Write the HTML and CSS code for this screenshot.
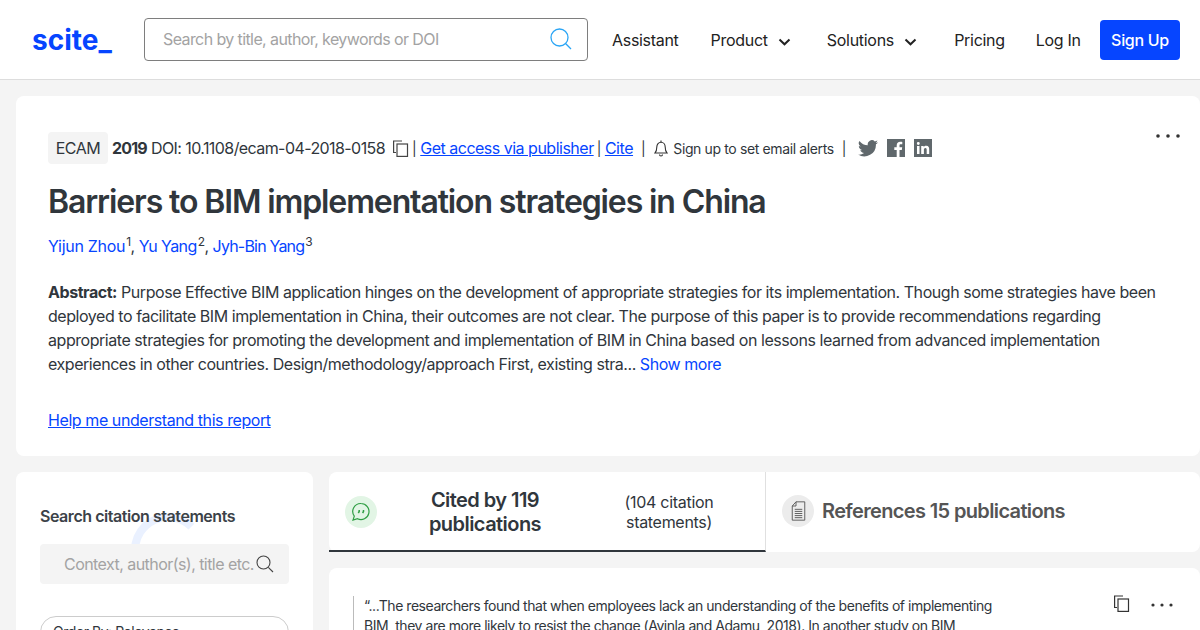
FILE: index.html
```html
<!DOCTYPE html>
<html lang="en">
<head>
<meta charset="utf-8">
<title>Barriers to BIM implementation strategies in China</title>
<link rel="stylesheet" href="styles.css">
</head>
<body>
<header class="topbar">
  <a class="logo">scite_</a>
  <div class="search">
    <span class="search-text">Search by title, author, keywords or DOI</span>
    <svg class="search-icon" width="24" height="24" viewBox="0 0 24 24" fill="none" stroke="#2aa5f5" stroke-width="1.3"><circle cx="10.5" cy="10.5" r="8.5"/><path d="M16.8 16.8 22 22"/></svg>
  </div>
  <nav class="nav">
    <a class="nav-a assistant">Assistant</a>
    <a class="nav-a product">Product <svg class="chev" width="13" height="8" viewBox="0 0 13 8" fill="none" stroke="#222" stroke-width="2"><path d="M1.500 1.500 6.500 6.300l5-4.800"/></svg></a>
    <a class="nav-a solutions">Solutions <svg class="chev" width="13" height="8" viewBox="0 0 13 8" fill="none" stroke="#222" stroke-width="2"><path d="M1.500 1.500 6.500 6.300l5-4.800"/></svg></a>
    <a class="nav-a pricing">Pricing</a>
    <a class="nav-a login">Log In</a>
    <a class="signup">Sign Up</a>
  </nav>
</header>
<main class="page">
  <section class="paper card">
    <svg class="dots dots-top" width="24" height="4" viewBox="0 0 24 4" fill="#333"><circle cx="2" cy="2" r="1.800"/><circle cx="12" cy="2" r="1.800"/><circle cx="22" cy="2" r="1.800"/></svg>
    <div class="meta">
      <span class="journal">ECAM</span>
      <b class="year">2019</b>
      <span class="doi">DOI: 10.1108/ecam-04-2018-0158</span>
      <svg class="copy" width="17" height="17" viewBox="0 0 17 17" fill="none" stroke="#444" stroke-width="1.200"><path d="M10 1H1.600v11.500H4"/><rect x="5" y="4" width="10.500" height="12.400"/></svg>
      <span class="sep sep1">|</span>
      <a class="link publisher">Get access via publisher</a>
      <span class="sep sep2">|</span>
      <a class="link cite">Cite</a>
      <span class="sep sep3">|</span>
      <svg class="bell" width="14" height="17" viewBox="0 0 14 17" fill="none" stroke="#333" stroke-width="1.100"><path d="M1 13h12c-1.500-1.500-1.800-3-1.800-6 0-2.800-1.800-4.800-4.200-4.800S2.800 4.200 2.800 7c0 3-.3 4.500-1.800 6Z"/><path d="M7 .5v1.700M5.500 14.500a1.500 1.500 0 0 0 3 0"/></svg>
      <span class="alerts">Sign up to set email alerts</span>
      <span class="sep sep4">|</span>
      <svg class="social tw" width="20" height="17" viewBox="0 0 24 20" fill="#60686c"><path d="M24 2.400a9.800 9.800 0 0 1-2.800.8A4.900 4.900 0 0 0 23.300.5a9.800 9.800 0 0 1-3.100 1.200 4.900 4.900 0 0 0-8.400 4.500A14 14 0 0 1 1.700.9a4.900 4.900 0 0 0 1.500 6.600 4.900 4.900 0 0 1-2.200-.6c0 2.300 1.600 4.400 3.900 4.900a4.900 4.900 0 0 1-2.200.1 4.900 4.900 0 0 0 4.600 3.400A9.900 9.900 0 0 1 0 17.300 14 14 0 0 0 21.500 4.900 10 10 0 0 0 24 2.400Z"/></svg>
      <svg class="social fb" width="18" height="18" viewBox="0 0 18 18"><rect width="18" height="18" fill="#60686c"/><path fill="#fff" d="M12.500 18v-7h2.300l.4-2.700h-2.700V6.600c0-.8.200-1.300 1.300-1.300h1.500V2.900c-.3 0-1.100-.1-2.100-.1-2.100 0-3.500 1.300-3.500 3.600v1.900H7.300V11h2.400v7h2.800Z"/></svg>
      <svg class="social li" width="18" height="18" viewBox="0 0 18 18"><rect width="18" height="18" fill="#60686c"/><path fill="#fff" d="M3 7h2.500v8H3V7Zm1.300-4a1.400 1.400 0 1 1 0 2.900 1.400 1.400 0 0 1 0-2.900ZM7.200 7h2.400v1.100c.4-.7 1.300-1.300 2.600-1.300 2.600 0 3 1.700 3 3.900V15h-2.500v-3.800c0-.9 0-2.100-1.300-2.100s-1.500 1-1.500 2V15H7.200V7Z"/></svg>
    </div>
    <h1 class="title">Barriers to BIM implementation strategies in China</h1>
    <p class="authors"><a class="a1">Yijun Zhou</a><sup>1</sup>, <a class="a2">Yu Yang</a><sup>2</sup>, <a class="a3">Jyh-Bin Yang</a><sup>3</sup></p>
    <p class="abstract"><b>Abstract:</b> Purpose Effective BIM application hinges on the development of appropriate strategies for its implementation. Though some strategies have been deployed to facilitate BIM implementation in China, their outcomes are not clear. The purpose of this paper is to provide recommendations regarding appropriate strategies for promoting the development and implementation of BIM in China based on lessons learned from advanced implementation experiences in other countries. Design/methodology/approach First, existing stra... <a class="more">Show more</a></p>
    <a class="link help">Help me understand this report</a>
  </section>
  <div class="lower">
    <aside class="side card">
      <span class="spinner"></span>
      <h2 class="side-title">Search citation statements</h2>
      <div class="side-search">
        <span>Context, author(s), title etc.</span>
        <svg width="18" height="18" viewBox="0 0 18 18" fill="none" stroke="#444" stroke-width="1.100"><circle cx="7.500" cy="7.500" r="6.500"/><path d="m12.300 12.300 4.700 4.700"/></svg>
      </div>
      <div class="order">Order By: Relevance</div>
    </aside>
    <div class="results">
      <div class="tabs">
        <div class="tab tab-on">
          <span class="round green"><svg width="20" height="20" viewBox="0 0 20 20" fill="none" stroke="#2f9e44" stroke-width="1.200"><path d="M10 1.500a8 8 0 1 1-3.500 15.200L2 18l1.300-3.800A8 8 0 0 1 10 1.500Z"/><path stroke-width="1.500" d="M8.200 8v1.500L7.300 11M12.500 8v1.500l-.9 1.500"/></svg></span>
          <strong class="tab-main">Cited by 119 publications</strong>
          <span class="tab-sub">(104 citation statements)</span>
        </div>
        <div class="tab tab-off">
          <span class="round grey"><svg width="15" height="20" viewBox="0 0 18 24" fill="none" stroke="#555" stroke-width="1.100"><path d="M6 1h10.500v22h-15V6L6 1Zm0 0v5H1.500"/><path d="M4.500 10h9M4.500 12.500h9M4.500 15h9M4.500 17.500h9M4.500 20h9"/></svg></span>
          <strong class="ref-text">References 15 publications</strong>
        </div>
      </div>
      <article class="statement card">
        <blockquote class="quote">“...The researchers found that when employees lack an understanding of the benefits of implementing BIM, they are more likely to resist the change (Ayinla and Adamu, 2018). In another study on BIM</blockquote>
        <div class="tools">
          <svg width="17" height="17" viewBox="0 0 17 17" fill="none" stroke="#333" stroke-width="1.200"><path d="M10 1H1.600v11.500H4"/><rect x="5" y="4" width="10.500" height="12.400"/></svg>
          <svg class="dots" width="22" height="4" viewBox="0 0 22 4" fill="#333"><circle cx="2" cy="2" r="1.600"/><circle cx="11" cy="2" r="1.600"/><circle cx="20" cy="2" r="1.600"/></svg>
        </div>
      </article>
    </div>
  </div>
</main>
</body>
</html>
```
FILE: styles.css
```css
* { box-sizing: border-box; }
html, body { margin: 0; height: 630px; overflow: hidden; }
body { background: #f4f4f4; color: #30363c; font-family: Inter, "Liberation Sans", sans-serif; font-size: 16px; letter-spacing: -0.45px; }
a { text-decoration: none; }

.topbar { height: 80px; background: #fff; border-bottom: 1px solid #ddd; display: flex; align-items: center; padding: 0 20px 0 32px; }
.logo { flex: none; width: 112px; color: #0645ff; font-family: Inter, sans-serif; font-weight: 700; font-size: 28px; line-height: 1; letter-spacing: 0; }
.search { flex: none; width: 444px; height: 43px; margin-top: -1px; border: 1px solid #7e7e7e; border-radius: 4px; display: flex; align-items: center; justify-content: space-between; padding: 0 14px 0 18px; }
.search-text { color: #a3a3a3; letter-spacing: -0.6px; }
.nav { display: flex; align-items: center; flex: 1; margin-left: 24px; color: #222; letter-spacing: -0.3px; }
.nav-a { color: #222; white-space: nowrap; }
.assistant { margin-right: 32px; }
.product { margin-right: 36px; }
.solutions { margin-right: 37px; }
.pricing { margin-right: 31px; }
.login { margin-right: 19px; }
.chev { margin-left: 6px; }
.signup { margin-left: auto; flex: none; width: 80px; height: 40px; border-radius: 4px; background: #0645ff; color: #fff; font-weight: 500; display: flex; align-items: center; justify-content: center; }

.page { padding: 16px 0 0 16px; }
.card { background: #fff; border-radius: 8px; }
.paper { position: relative; height: 360px; padding: 36px 32px 0; }
.dots-top { position: absolute; top: 38px; right: 20px; }
.meta { height: 32px; display: flex; align-items: center; white-space: nowrap; }
.journal { background: #f4f4f4; border-radius: 4px; width: 60px; text-align: center; height: 32px; line-height: 32px; }
.year { font-weight: 700; margin-left: 4px; letter-spacing: -0.8px; }
.doi { margin-left: 4px; letter-spacing: -0.58px; }
.copy { margin-left: 7px; }
.link { color: #0645ff; text-decoration: underline; }
.sep { color: #30363c; font-size: 14px; }
.sep1 { margin-left: 3px; }
.publisher { margin-left: 4px; letter-spacing: -0.5px; }
.sep2 { margin-left: 3px; }
.cite { margin-left: 4px; }
.sep3 { margin-left: 8px; }
.bell { margin-left: 9px; }
.alerts { font-size: 14px; margin-left: 5px; letter-spacing: -0.37px; }
.sep4 { margin-left: 8px; }
.social { margin-left: 9px; }
.tw { margin-left: 12px; }
.title { margin: 17px 0 0; font-size: 32px; line-height: 42px; font-weight: 600; letter-spacing: -1.12px; }
.authors { margin: 11px 0 0; line-height: 24px; letter-spacing: -0.5px; }
.authors a, .more { color: #0645ff; }
.authors .a1 { letter-spacing: -0.3px; }
.authors .a2 { letter-spacing: -0.6px; }
.authors .a3 { letter-spacing: -0.8px; }
.authors sup { font-size: 12px; line-height: 0; margin-left: 1px; }
.abstract { margin: 22px 0 0; line-height: 24px; }
.abstract b { font-weight: 700; }
.help { display: block; width: max-content; margin-top: 32px; line-height: 24px; letter-spacing: -0.42px; }

.lower { display: flex; gap: 16px; margin-top: 16px; }
.side { position: relative; width: 297px; height: 300px; padding: 32px 24px; flex: none; }
.side-title { margin: 0; position: relative; font-size: 16px; font-weight: 600; line-height: 24px; color: #3c4248; }
.spinner { position: absolute; left: 115px; top: 41px; width: 74px; height: 74px; border: 8px solid #eaf1ff; border-right-color: transparent; border-bottom-color: transparent; border-radius: 50%; }
.side-search { position: relative; margin-top: 16px; height: 40px; border-radius: 4px; background: #f4f4f4; display: flex; align-items: center; padding: 0 15px 0 24px; justify-content: space-between; color: #a3a3a3; white-space: nowrap; letter-spacing: -0.55px; }
.side-search svg { flex: none; }
.order { margin-top: 32px; height: 60px; border: 1px solid #ccc; border-radius: 16px; padding: 6px 12px; font-size: 14px; }
.results { flex: 1; min-width: 0; }
.tabs { height: 80px; display: flex; background: #fff; border-radius: 8px; }
.tab { display: flex; align-items: center; height: 80px; }
.tab-on { width: 437px; padding: 2px 0 0 16px; border-bottom: 2px solid #30363c; border-right: 1px solid #e0e0e0; }
.tab-off { flex: 1; padding: 0 0 2px 16px; }
.round { width: 32px; height: 32px; border-radius: 50%; display: flex; align-items: center; justify-content: center; flex: none; }
.green { background: #e2f5e5; }
.grey { background: #ececec; }
.tab-main { width: 160px; margin-left: 28px; font-size: 20px; line-height: 24px; text-align: center; font-weight: 600; letter-spacing: -0.55px; }
.tab-sub { width: 112px; margin-left: 48px; line-height: 20px; text-align: center; letter-spacing: -0.3px; }
.ref-text { margin-left: 8px; font-size: 20px; font-weight: 600; color: #555; letter-spacing: -0.64px; }
.statement { margin-top: 16px; height: 120px; padding: 28px 24px 0; display: flex; justify-content: space-between; }
.quote { margin: 0; width: 640px; border-left: 1px solid #bbb; padding-left: 10px; font-size: 14px; line-height: 20px; letter-spacing: -0.46px; }
.tools { display: flex; align-items: flex-start; gap: 21px; margin: -1px 3px 0 0; }
.tools .dots { margin-top: 8px; }
```
